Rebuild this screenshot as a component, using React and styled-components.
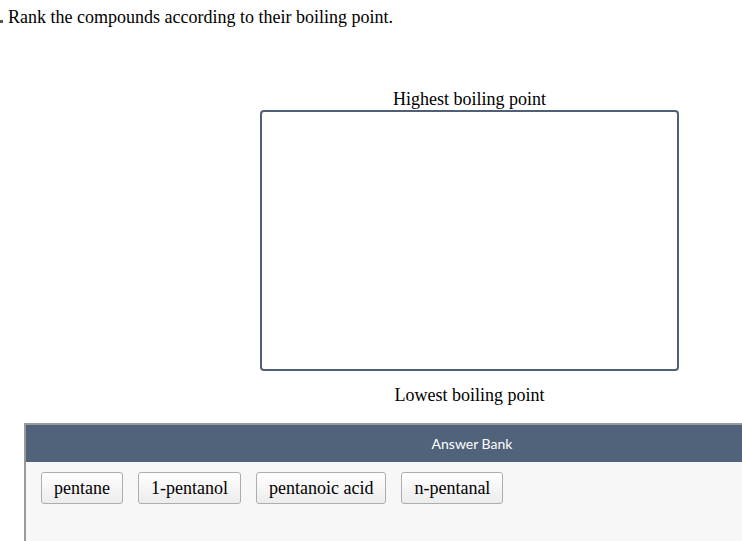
import React from "react";
import styled, { createGlobalStyle } from "styled-components";

const GlobalStyle = createGlobalStyle`
  html, body {
    margin: 0;
    padding: 0;
    background: #ffffff;
    overflow: hidden;
  }
  body {
    font-family: "Liberation Serif", "Times New Roman", serif;
    color: #000;
  }
`;

const Page = styled.div`
  width: 742px;
  height: 541px;
  overflow: hidden;
`;

const Prompt = styled.div`
  display: flex;
  align-items: baseline;
  gap: 5px;
  padding-top: 7px;
  font-size: 18px;
  line-height: 20px;
`;

const Marker = styled.span`
  display: inline-block;
  width: 3px;
  height: 3px;
  background: #555;
`;

const RankArea = styled.div`
  margin-top: 62px;
  margin-left: 260px;
  width: 419px;
  display: flex;
  flex-direction: column;
  align-items: center;
`;

const EndLabel = styled.div`
  font-size: 18px;
  line-height: 20px;
  text-align: center;
`;

const DropBox = styled.div`
  box-sizing: border-box;
  width: 419px;
  height: 261px;
  border: 2px solid #4f6076;
  border-radius: 4px;
  background: #fff;
  margin: ${(p) => p.$margin};
`;

const Bank = styled.div`
  margin-top: 18px;
  margin-left: 24px;
  width: 892px;
  border-top: 2px solid #9a9a9a;
  border-left: 2px solid #9a9a9a;
  background: #f7f7f7;
  height: 200px;
`;

const BankHeader = styled.div`
  height: 37px;
  background: #51637a;
  color: #ffffff;
  font-family: Lato, "Open Sans", sans-serif;
  font-size: 14px;
  display: flex;
  align-items: center;
  justify-content: center;
`;

const Chips = styled.div`
  display: flex;
  gap: 15px;
  padding: 10px 15px;
`;

const Chip = styled.button`
  box-sizing: border-box;
  height: 32px;
  padding: 0 12px;
  border: 1px solid #adadad;
  border-radius: 3px;
  background: linear-gradient(#ffffff, #ececec);
  font-family: "Liberation Serif", "Times New Roman", serif;
  font-size: 18px;
  color: #000;
  line-height: 30px;
`;

const compounds = ["pentane", "1-pentanol", "pentanoic acid", "n-pentanal"];

export default function App() {
  return (
    <Page>
      <GlobalStyle />
      <Prompt>
        <Marker />
        Rank the compounds according to their boiling point.
      </Prompt>
      <RankArea>
        <EndLabel>Highest boiling point</EndLabel>
        <DropBox $margin="1px 0 14px" />
        <EndLabel>Lowest boiling point</EndLabel>
      </RankArea>
      <Bank>
        <BankHeader>Answer Bank</BankHeader>
        <Chips>
          {compounds.map((c) => (
            <Chip key={c}>{c}</Chip>
          ))}
        </Chips>
      </Bank>
    </Page>
  );
}
